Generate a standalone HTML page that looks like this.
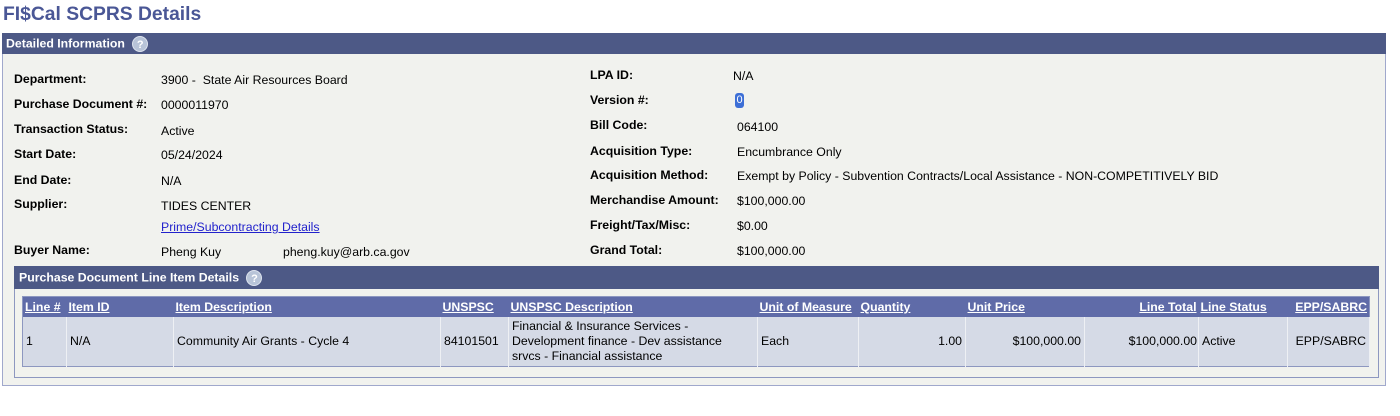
<!DOCTYPE html>
<html><head><style>
*{margin:0;padding:0;box-sizing:border-box}
body{width:1400px;height:416px;background:#fff;font-family:"Liberation Sans",Arial,sans-serif;font-size:12.3px;color:#000;position:relative;overflow:hidden}
.a{position:absolute;white-space:nowrap}
.b{font-weight:bold}
.h{color:#fff;font-weight:bold;font-size:12.3px}
.q{display:inline-block;width:16px;height:16px;border-radius:50%;background:#b8c4d8;color:#fff;font-size:11px;text-align:center;line-height:16px;vertical-align:middle;margin-left:4px;border:1px solid #dde3ee}
th,td{font-size:12.3px}
th{color:#fff;text-decoration:underline;font-weight:bold;text-align:left;padding:0 2px;height:20px;background:#5f6ba8}
td{background:#d5dae6;height:50px;padding:0 3px;border-right:1px solid #eef0f4;vertical-align:middle}
table{border-collapse:collapse;position:absolute;left:22px;top:296px;width:1348px;border:1px solid #8d97c0}
</style></head><body>
<div class="a b" style="left:3px;top:4px;font-size:19.3px;color:#4a5796">FI$Cal SCPRS Details</div>
<div class="a" style="left:2px;top:33px;width:1384px;height:353px;background:#f1f2ee;border:1px solid #a0a8cc"></div>
<div class="a" style="left:2px;top:33px;width:1384px;height:21px;background:#4d5986"></div>
<div class="a h" style="left:6px;top:36px">Detailed Information <span class="q">?</span></div>

<div class="a b" style="left:14px;top:72px">Department:</div><div class="a" style="left:161px;top:73px">3900 -&nbsp; State Air Resources Board</div>
<div class="a b" style="left:14px;top:97px">Purchase Document #:</div><div class="a" style="left:161px;top:98px">0000011970</div>
<div class="a b" style="left:14px;top:122px">Transaction Status:</div><div class="a" style="left:161px;top:124px">Active</div>
<div class="a b" style="left:14px;top:147px">Start Date:</div><div class="a" style="left:161px;top:148px">05/24/2024</div>
<div class="a b" style="left:14px;top:173px">End Date:</div><div class="a" style="left:161px;top:174px">N/A</div>
<div class="a b" style="left:14px;top:197px">Supplier:</div><div class="a" style="left:161px;top:199px">TIDES CENTER</div>
<div class="a" style="left:161px;top:220px;color:#2222cc;text-decoration:underline">Prime/Subcontracting Details</div>
<div class="a b" style="left:14px;top:243px">Buyer Name:</div><div class="a" style="left:161px;top:245px">Pheng Kuy</div><div class="a" style="left:283px;top:245px">pheng.kuy@arb.ca.gov</div>

<div class="a b" style="left:590px;top:68px">LPA ID:</div><div class="a" style="left:733px;top:69px">N/A</div>
<div class="a b" style="left:590px;top:93px">Version #:</div><div class="a" style="left:735px;top:93px;width:9px;height:15px;background:#3d6fd6;border-radius:3px;color:#fff;font-size:11px;text-align:center;line-height:15px">0</div>
<div class="a b" style="left:590px;top:118px">Bill Code:</div><div class="a" style="left:737px;top:120px">064100</div>
<div class="a b" style="left:590px;top:144px">Acquisition Type:</div><div class="a" style="left:737px;top:145px">Encumbrance Only</div>
<div class="a b" style="left:590px;top:168px">Acquisition Method:</div><div class="a" style="left:737px;top:169px">Exempt by Policy - Subvention Contracts/Local Assistance - NON-COMPETITIVELY BID</div>
<div class="a b" style="left:590px;top:193px">Merchandise Amount:</div><div class="a" style="left:737px;top:194px">$100,000.00</div>
<div class="a b" style="left:590px;top:218px">Freight/Tax/Misc:</div><div class="a" style="left:737px;top:219px">$0.00</div>
<div class="a b" style="left:590px;top:243px">Grand Total:</div><div class="a" style="left:737px;top:244px">$100,000.00</div>

<div class="a" style="left:14px;top:266px;width:1365px;height:112px;border:1px solid #8d97c0;background:#f1f2ee"></div>
<div class="a" style="left:14px;top:266px;width:1365px;height:23px;background:#4d5986"></div>
<div class="a h" style="left:19px;top:270px">Purchase Document Line Item Details <span class="q">?</span></div>

<table>
<tr><th style="width:44px">Line #</th><th style="width:107px">Item ID</th><th style="width:267px">Item Description</th><th style="width:68px">UNSPSC</th><th style="width:249px">UNSPSC Description</th><th style="width:101px">Unit of Measure</th><th style="width:107px">Quantity</th><th style="width:119px">Unit Price</th><th style="width:114px;text-align:right">Line Total</th><th style="width:89px">Line Status</th><th style="text-align:right">EPP/SABRC</th></tr>
<tr><td>1</td><td>N/A</td><td>Community Air Grants - Cycle 4</td><td>84101501</td><td style="line-height:15px">Financial &amp; Insurance Services -<br>Development finance - Dev assistance<br>srvcs - Financial assistance</td><td>Each</td><td style="text-align:right">1.00</td><td style="text-align:right">$100,000.00</td><td style="text-align:right;padding-right:1px">$100,000.00</td><td>Active</td><td style="text-align:right">EPP/SABRC</td></tr>
</table>
</body></html>
